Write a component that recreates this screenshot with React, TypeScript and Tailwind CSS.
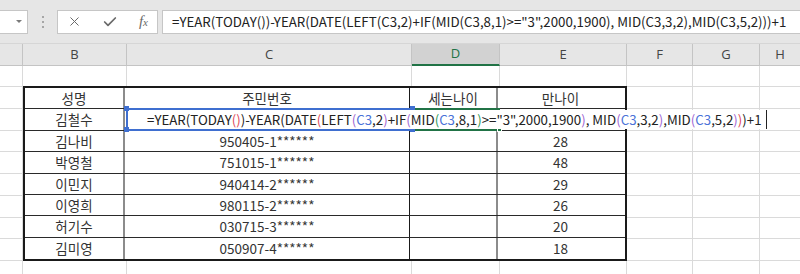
import { X, Check } from 'lucide-react';

const FORMULA = '=YEAR(TODAY())-YEAR(DATE(LEFT(C3,2)+IF(MID(C3,8,1)>="3",2000,1900), MID(C3,3,2),MID(C3,5,2)))+1';

// colored pieces of the formula while it is being edited
const RED = 'text-[#e0485a]';
const PURPLE = 'text-[#a066d4]';
const GREEN = 'text-[#2e9a5a]';
const REF = 'text-[#4a72d8]';

const editParts: [string, string][] = [
  ['=YEAR(TODAY', ''],
  ['()', RED],
  [')-YEAR(DATE', ''],
  ['(', RED],
  ['LEFT', ''],
  ['(', PURPLE],
  ['C3', REF],
  [',2', ''],
  [')', PURPLE],
  ['+IF', ''],
  ['(', PURPLE],
  ['MID', ''],
  ['(', GREEN],
  ['C3', REF],
  [',8,1', ''],
  [')', GREEN],
  ['>="3",2000,1900', ''],
  [')', PURPLE],
  [', MID', ''],
  ['(', PURPLE],
  ['C3', REF],
  [',3,2', ''],
  [')', PURPLE],
  [',MID', ''],
  ['(', PURPLE],
  ['C3', REF],
  [',5,2', ''],
  [')', PURPLE],
  [')', RED],
  [')+1', ''],
];

const rows = [
  { name: '성명', id: '주민번호', age: '세는나이', real: '만나이' },
  { name: '김철수', id: '', age: '', real: '' },
  { name: '김나비', id: '950405-1******', age: '', real: '28' },
  { name: '박영철', id: '751015-1******', age: '', real: '48' },
  { name: '이민지', id: '940414-2******', age: '', real: '29' },
  { name: '이영희', id: '980115-2******', age: '', real: '26' },
  { name: '허기수', id: '030715-3******', age: '', real: '20' },
  { name: '김미영', id: '050907-4******', age: '', real: '18' },
];

const headers = [
  { label: '', w: 'w-[23px]' },
  { label: 'B', w: 'w-[104px]' },
  { label: 'C', w: 'w-[285px]' },
  { label: 'D', w: 'w-[88px]', active: true },
  { label: 'E', w: 'w-[127px]' },
  { label: 'F', w: 'w-[66px]' },
  { label: 'G', w: 'w-[67px]' },
  { label: 'H', w: 'w-[41px]' },
];

const cellFont = { fontFamily: '"Noto Sans CJK KR", "Noto Sans", sans-serif' };

function Blank() {
  return <div className="border-r border-b border-[#dadada]" />;
}

export default function App() {
  return (
    <div className="w-[800px] h-[274px] overflow-hidden bg-white" style={cellFont}>
      {/* Formula bar */}
      <div className="h-[43px] bg-[#e6e6e6] flex items-center gap-0">
        <div className="w-[28px] h-[24px] bg-white border-y border-r border-[#c6c6c6] flex items-center justify-end pr-[5px]">
          <div className="w-0 h-0 border-x-[3px] border-x-transparent border-t-[3px] border-t-[#7a7a7a]" />
        </div>
        <div className="w-[29px] flex flex-col items-center gap-[3px]">
          <div className="w-[2px] h-[2px] bg-[#a6a6a6]" />
          <div className="w-[2px] h-[2px] bg-[#a6a6a6]" />
          <div className="w-[2px] h-[2px] bg-[#a6a6a6]" />
        </div>
        <div className="w-[101px] h-[24px] bg-white border border-[#c6c6c6] flex items-center justify-between px-[9px]">
          <X size={15} strokeWidth={1.6} className="text-[#6a6a6a]" />
          <Check size={16} strokeWidth={2.6} className="text-[#6a6a6a]" />
          <span className="text-[#6a6a6a] italic text-[15px] leading-none" style={{ fontFamily: '"Liberation Serif", serif' }}>
            f<span className="text-[11px]">x</span>
          </span>
        </div>
        <div className="ml-[4px] flex-1 h-[24px] bg-white border-y border-l border-[#c6c6c6] flex items-center pl-[9px] text-[13.3px] text-[#222] whitespace-nowrap overflow-hidden">
          {FORMULA}
        </div>
      </div>

      {/* Column headers */}
      <div className="flex h-[23px] bg-[#e6e6e6] border-t border-[#d6d6d6]" style={{ fontFamily: '"Open Sans", sans-serif' }}>
        {headers.map((h, i) => (
          <div
            key={i}
            className={`${h.w} shrink-0 flex items-center justify-center text-[13px] border-r border-[#c4c4c4] ${
              h.active ? 'bg-[#d2d2d2] text-[#217346] border-b-2 border-b-[#217346]' : 'text-[#444] border-b border-b-[#c4c4c4]'
            }`}
          >
            {h.label}
          </div>
        ))}
      </div>

      {/* Sheet body */}
      <div className="relative grid grid-cols-[23px_104px_285px_88px_127px_66px_67px_41px] grid-rows-[21px_repeat(8,21.75px)_21px]">
        {Array.from({ length: 8 }).map((_, i) => (
          <Blank key={`top-${i}`} />
        ))}
        {Array.from({ length: 8 }).map((_, r) => (
          <div key={`a-${r}`} className="contents">
            <div className="border-r border-b border-[#dadada]" style={{ gridRow: r + 2, gridColumn: 1 }} />
            <div className="border-r border-b border-[#dadada]" style={{ gridRow: r + 2, gridColumn: 6 }} />
            <div className="border-r border-b border-[#dadada]" style={{ gridRow: r + 2, gridColumn: 7 }} />
            <div className="border-r border-b border-[#dadada]" style={{ gridRow: r + 2, gridColumn: 8 }} />
          </div>
        ))}

        {/* Table */}
        <div className="col-start-2 col-end-6 row-start-2 row-end-10 -mt-px border-2 border-[#1a1a1a] grid grid-rows-[repeat(8,1fr)] text-[13.5px] text-[#333]">
          {rows.map((row, r) => (
            <div
              key={r}
              className={`grid grid-cols-[100px_285px_88px_125px] ${r < rows.length - 1 ? 'border-b border-[#2a2a2a]' : ''}`}
            >
              <div className="flex items-center justify-center border-r-2 border-[#8c8c8c]">{row.name}</div>
              <div className="flex items-center justify-center border-r border-[#1a1a1a]">{row.id}</div>
              <div className="flex items-center justify-center border-r-2 border-[#8c8c8c]">{row.age}</div>
              <div className="flex items-center justify-center">{row.real}</div>
            </div>
          ))}
        </div>

        {Array.from({ length: 8 }).map((_, i) => (
          <Blank key={`bot-${i}`} />
        ))}

        {/* Active cell D3 (green) */}
        <div className="absolute left-[412px] top-[42px] w-[88px] h-[23px] border-y-2 border-[#217346]" />
        <div className="absolute left-[497px] top-[61px] w-[5px] h-[5px] bg-[#217346] border border-white" />

        {/* C3 reference highlight */}
        <div className="absolute left-[126px] top-[42px] w-[287px] h-[23px] border-2 border-[#3f6fd0]" />
        <div className="absolute left-[124px] top-[40px] w-[5px] h-[5px] bg-[#3f6fd0]" />
        <div className="absolute left-[410px] top-[40px] w-[5px] h-[5px] bg-[#3f6fd0]" />
        <div className="absolute left-[124px] top-[61px] w-[5px] h-[5px] bg-[#3f6fd0]" />
        <div className="absolute left-[410px] top-[61px] w-[5px] h-[5px] bg-[#3f6fd0]" />

        {/* In-cell editor */}
        <div className="absolute left-[129px] top-[44px] w-[638px] h-[19px] bg-white flex items-center pl-[18px] text-[13.3px] text-[#222] whitespace-nowrap border-r border-[#222]">
          {editParts.map(([t, c], i) => (
            <span key={i} className={c}>
              {t}
            </span>
          ))}
        </div>
      </div>
    </div>
  );
}
